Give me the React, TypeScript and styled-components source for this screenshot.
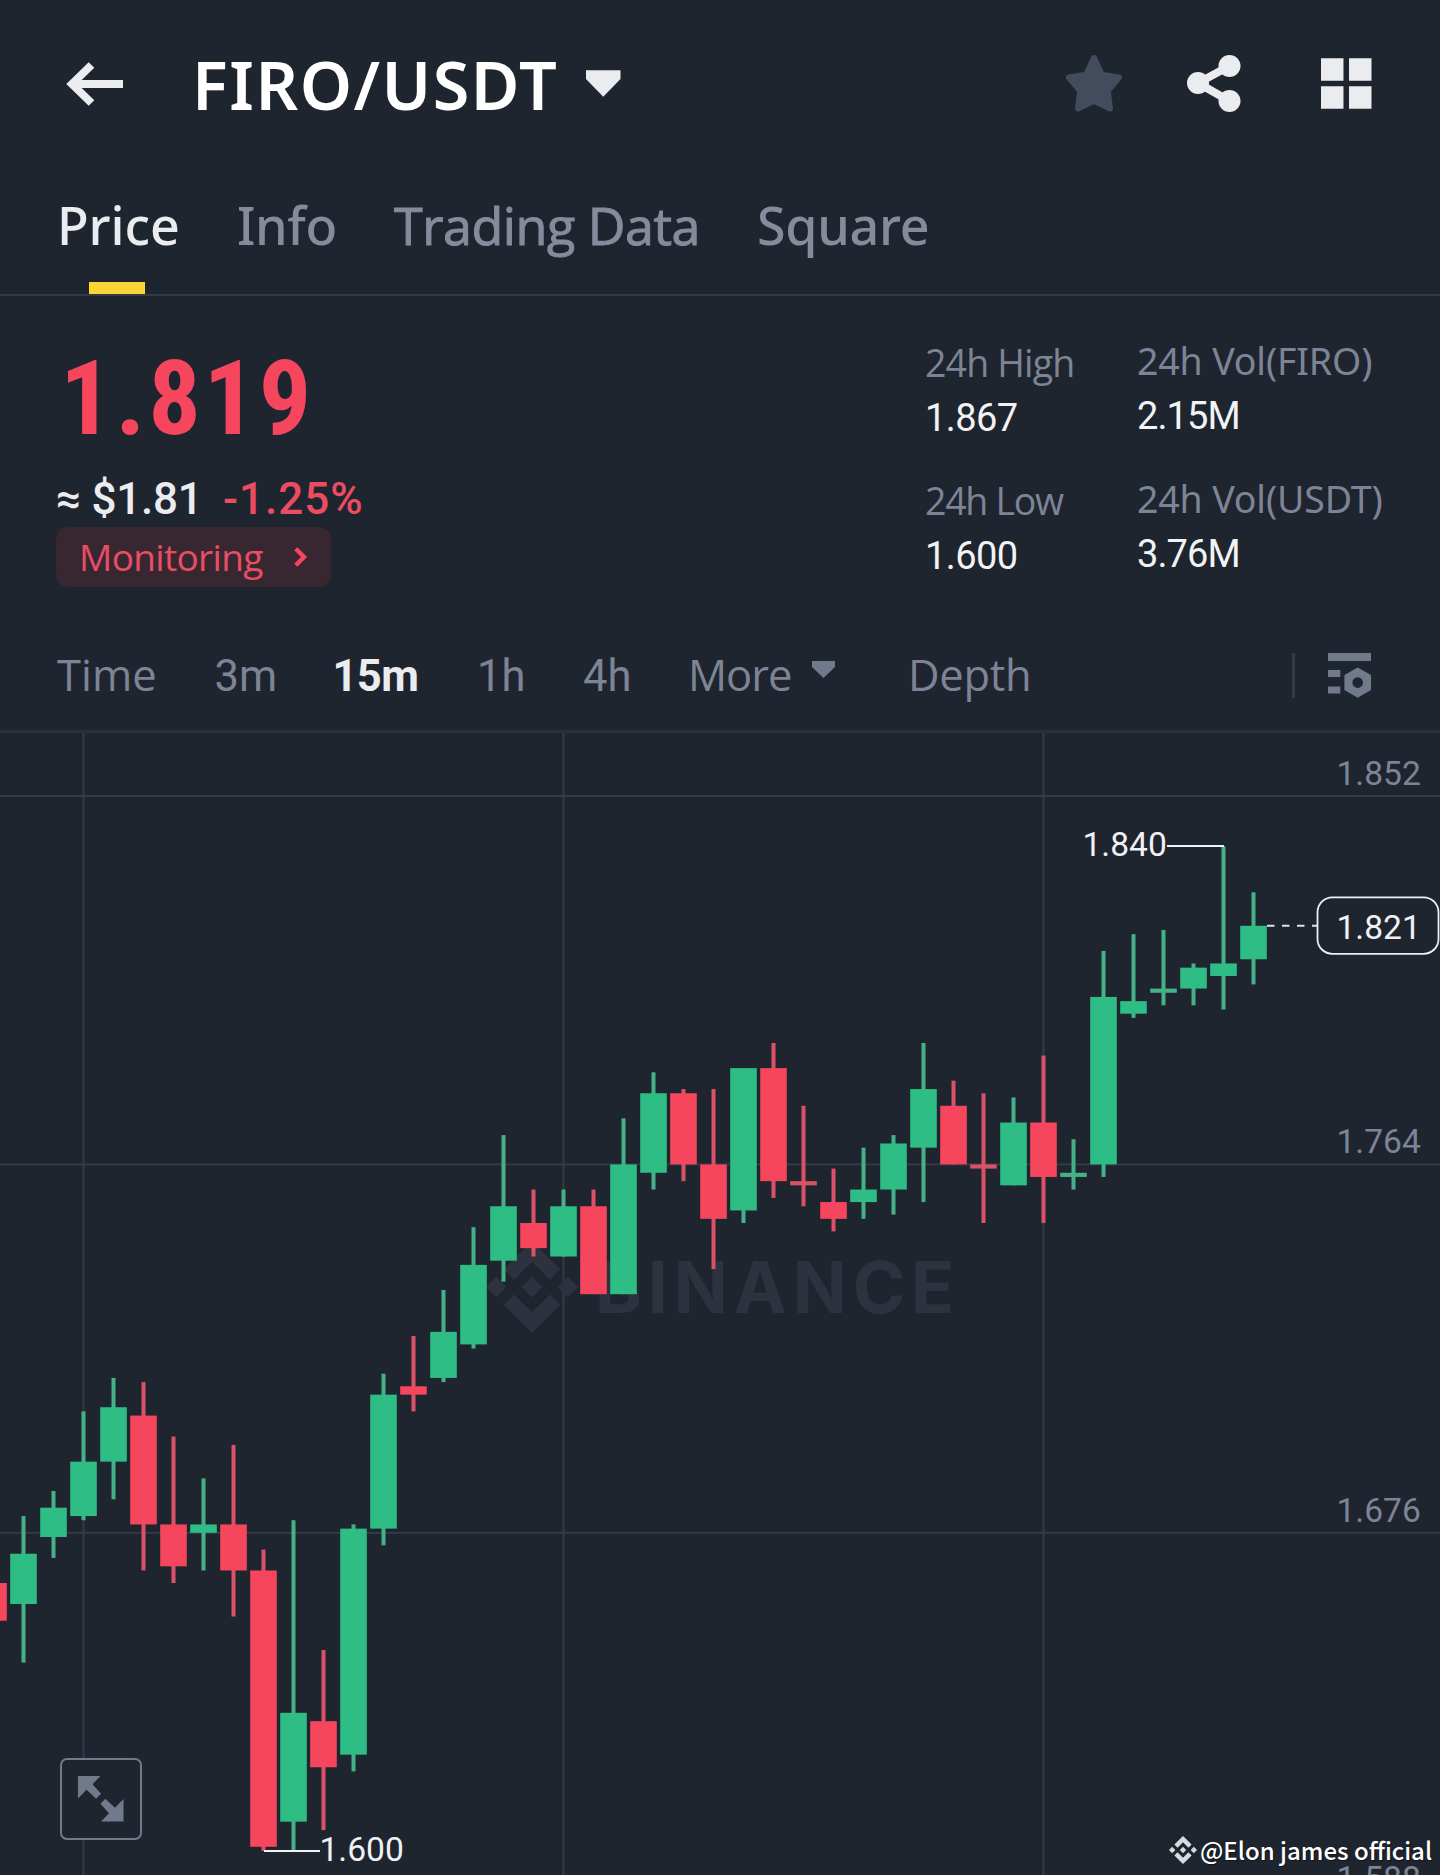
import React from "react";
import styled, { createGlobalStyle } from "styled-components";

const color = {
  bg: "#1f252f",
  text: "#eaecef",
  muted: "#848c9c",
  label: "#7c8495",
  icon: "#717a8b",
  line: "#333b47",
  red: "#f6465d",
  redSoft: "#d95268",
  green: "#2ebd85",
  greenSoft: "#45b187",
};

const humanist = `"Noto Sans", "Open Sans", sans-serif`;
const open = `"Open Sans", "Noto Sans", sans-serif`;
const numeric = `Roboto, "Noto Sans", sans-serif`;

const GlobalStyle = createGlobalStyle`
  * { box-sizing: border-box; }
  body { margin: 0; background: ${color.bg}; }
`;

const Screen = styled.main`
  width: 1440px;
  height: 1875px;
  overflow: hidden;
  background: ${color.bg};
  color: ${color.text};
  font-family: ${humanist};
  white-space: nowrap;
`;

const Header = styled.header`
  display: flex;
  align-items: center;
  height: 168px;
  padding: 0 68.5px 1px 66px;
`;

const Pair = styled.h1`
  margin: 0 0 0 68px;
  width: 393.5px;
  font-size: 66.5px;
  font-weight: 600;
  line-height: 90px;
  letter-spacing: 1.5px;
  color: #fff;
`;

const Actions = styled.div`
  display: flex;
  align-items: center;
  margin-left: auto;
`;

const Icon = styled.svg<{ $gap?: number }>`
  display: block;
  flex: none;
  overflow: visible;
  margin-left: ${(p) => p.$gap ?? 0}px;
`;

const Tabs = styled.nav`
  display: grid;
  grid-template-columns: 180px 157px 363px auto;
  height: 128px;
  padding-left: 57px;
  border-bottom: 2px solid ${color.line};
`;

const Tab = styled.span<{ $active?: boolean; $open?: boolean; $track?: number }>`
  position: relative;
  justify-self: start;
  height: 126px;
  line-height: 114px;
  font-family: ${(p) => (p.$open ? open : humanist)};
  font-size: 52px;
  font-weight: ${(p) => (p.$open ? 400 : 500)};
  -webkit-text-stroke: ${(p) => (p.$open ? "1px" : "0")} currentColor;
  letter-spacing: ${(p) => p.$track ?? 0}px;
  color: ${(p) => (p.$active ? color.text : color.muted)};

  ${(p) =>
    p.$active &&
    `&::after {
      content: "";
      position: absolute;
      left: calc(50% - 29.5px);
      bottom: 0;
      width: 56px;
      height: 12px;
      background: #fcd535;
    }`}
`;

const Summary = styled.section`
  display: flex;
  height: 324px;
`;

const Quote = styled.div`
  width: 925px;
  padding: 41.5px 0 0 56px;
`;

const LastPrice = styled.div`
  padding-left: 4px;
  font-family: "Roboto Condensed", Roboto, sans-serif;
  font-stretch: 75%;
  font-size: 104px;
  font-weight: 700;
  line-height: 122px;
  letter-spacing: 2.7px;
  color: ${color.red};
`;

const Change = styled.div`
  display: flex;
  margin-top: 12.5px;
  font-family: ${numeric};
  font-size: 44px;
  font-weight: 500;
  line-height: 54px;
`;

const Fiat = styled.span`
  width: 167px;
  letter-spacing: -0.25px;
`;

const Percent = styled.span`
  letter-spacing: 1px;
  color: #ea4c62;
`;

const Monitoring = styled.div`
  display: flex;
  align-items: center;
  justify-content: space-between;
  width: 275px;
  height: 60px;
  margin-top: 0.5px;
  padding: 0 24px 0 23px;
  border-radius: 12px;
  background: #382731;
  color: #e84e63;
  font-family: ${open};
  font-size: 37px;
  letter-spacing: -0.65px;
`;

const StatColumn = styled.div<{ $top: number; $width: number }>`
  width: ${(p) => p.$width}px;
  padding-top: ${(p) => p.$top}px;

  dl { margin: 0 0 26.7px; }
`;

const StatLabel = styled.dt<{ $open?: boolean; $track?: number }>`
  font-family: ${(p) => (p.$open ? open : humanist)};
  font-size: 37.5px;
  line-height: 50px;
  letter-spacing: ${(p) => p.$track ?? -0.1}px;
  color: ${color.label};
`;

const StatValue = styled.dd<{ $track: number }>`
  margin: 0;
  font-family: ${numeric};
  font-size: 38px;
  line-height: 61.5px;
  letter-spacing: ${(p) => p.$track}px;
  color: #f2f3f5;
`;

const Intervals = styled.div`
  display: grid;
  grid-template-columns: 157.5px 118px 144.500px 106px 105px 220px 384px 36px auto;
  grid-template-rows: 110px;
  align-items: center;
  height: 110px;
  padding-left: 57px;
`;

const Interval = styled.span<{ $active?: boolean; $numeric?: boolean; $track?: number }>`
  display: flex;
  align-items: center;
  font-family: ${(p) => (p.$numeric ? numeric : open)};
  font-size: 43.5px;
  font-weight: ${(p) => (p.$active ? 700 : 400)};
  line-height: 60px;
  padding-top: ${(p) => (p.$numeric ? 4 : 0)}px;
  letter-spacing: ${(p) => p.$track ?? 0}px;
  color: ${(p) => (p.$active ? color.text : color.label)};
`;

const Divider = styled.i`
  width: 3px;
  height: 45px;
  background: ${color.line};
`;

const ChartPanel = styled.section`
  position: relative;
  height: 1145px;
  border-top: 3px solid #29303c;
`;

const ChartSvg = styled.svg`
  display: block;
`;

const ChartText = styled.text<{ $muted?: boolean }>`
  font-family: ${numeric};
  font-size: 33.6px;
  fill: ${(p) => (p.$muted ? color.label : "#f0f1f4")};
`;

const WatermarkText = styled.text`
  font-family: Inter, sans-serif;
  font-size: 71px;
  font-weight: 700;
  letter-spacing: 5.9px;
  fill: #2d323e;
`;

const Expand = styled.button`
  position: absolute;
  left: 60px;
  top: 1024.5px;
  width: 82px;
  height: 82px;
  padding: 16.3px;
  border: 2px solid ${color.icon};
  border-radius: 7px;
  background: ${color.bg};
`;

const Credit = styled.div`
  position: absolute;
  left: 1169px;
  top: 1098px;
  display: flex;
  align-items: center;
  gap: 3px;
  height: 38px;
  font-family: "Noto Sans CJK SC", sans-serif;
  font-size: 24px;
  font-weight: 500;
  line-height: 38px;
  color: #fff;
  text-shadow: 1px 1px 1px rgba(0, 0, 0, 0.5);
`;

const logoPath =
  "M38.73 53.2l24.59-24.58 24.6 24.6 14.3-14.31L63.32 0l-38.9 38.9zM0 63.31l14.3-14.31 14.31 14.31-14.31 14.3zM38.73 73.41l24.59 24.59 24.6-24.6 14.31 14.29-38.91 38.91-38.91-38.88zM98 63.31l14.3-14.31 14.31 14.3-14.31 14.32zM77.83 63.3L63.32 48.78 48.81 63.28l14.51 14.5z";

const Logo = ({ size, fill, x, y }: { size: number; fill: string; x?: number; y?: number }) => (
  <svg x={x} y={y} width={size} height={size} viewBox="0 0 126.61 126.61">
    <path d={logoPath} fill={fill} />
  </svg>
);

// Prices in thousandths: open/close extremes of the body, then the wick.
type Candle = [up: 0 | 1, bodyHigh: number, bodyLow: number, high: number, low: number];

const candles: Candle[] = [
  [0, 1664, 1655, 1664, 1655],
  [1, 1671, 1659, 1680, 1645],
  [1, 1682, 1675, 1686, 1670],
  [1, 1693, 1680, 1705, 1679],
  [1, 1706, 1693, 1713, 1684],
  [0, 1704, 1678, 1712, 1667],
  [0, 1678, 1668, 1699, 1664],
  [1, 1678, 1676, 1689, 1667],
  [0, 1678, 1667, 1697, 1656],
  [0, 1667, 1601, 1672, 1600],
  [1, 1633, 1607, 1679, 1600],
  [0, 1631, 1620, 1648, 1605],
  [1, 1677, 1623, 1678, 1619],
  [1, 1709, 1677, 1714, 1673],
  [0, 1711, 1709, 1723, 1705],
  [1, 1724, 1713, 1734, 1712],
  [1, 1740, 1721, 1749, 1720],
  [1, 1754, 1741, 1771, 1736],
  [0, 1750, 1744, 1758, 1742],
  [1, 1754, 1742, 1758, 1742],
  [0, 1754, 1733, 1758, 1733],
  [1, 1764, 1733, 1775, 1733],
  [1, 1781, 1762, 1786, 1758],
  [0, 1781, 1764, 1782, 1760],
  [0, 1764, 1751, 1782, 1739],
  [1, 1787, 1753, 1787, 1750],
  [0, 1787, 1760, 1793, 1756],
  [0, 1760, 1759, 1778, 1754],
  [0, 1755, 1751, 1763, 1748],
  [1, 1758, 1755, 1768, 1751],
  [1, 1769, 1758, 1771, 1752],
  [1, 1782, 1768, 1793, 1755],
  [0, 1778, 1764, 1784, 1764],
  [0, 1764, 1763, 1781, 1750],
  [1, 1774, 1759, 1780, 1759],
  [0, 1774, 1761, 1790, 1750],
  [1, 1762, 1761, 1770, 1758],
  [1, 1804, 1764, 1815, 1761],
  [1, 1803, 1800, 1819, 1799],
  [1, 1806, 1805, 1820, 1802],
  [1, 1811, 1806, 1812, 1802],
  [1, 1812, 1809, 1840, 1801],
  [1, 1821, 1813, 1829, 1807],
];

const yOf = (price: number) => 796 + (1852 - price) * 4.1864;
const xOf = (index: number) => 83.5 + (index - 3) * 30;

const gridPrices = [1852, 1764, 1676];
const axisPrices = [1852, 1764, 1676, 1588];

const CandleShape = ({ candle, index }: { candle: Candle; index: number }) => {
  const [up, bodyHigh, bodyLow, high, low] = candle;
  const x = xOf(index);
  const thin = bodyHigh - bodyLow === 1;
  const soft = up ? color.greenSoft : color.redSoft;
  return (
    <g>
      <rect x={x - 2} y={yOf(high)} width={4} height={yOf(low) - yOf(high)} fill={soft} />
      <rect
        x={x - 13.3}
        y={yOf(bodyHigh)}
        width={26.6}
        height={yOf(bodyLow) - yOf(bodyHigh)}
        fill={thin ? soft : up ? color.green : color.red}
      />
    </g>
  );
};

const Chart = () => (
  <ChartSvg width={1440} height={1142} viewBox="0 733 1440 1142">
    {gridPrices.map((p) => (
      <rect key={p} x={0} y={yOf(p) - 1} width={1440} height={2} fill={color.line} />
    ))}
    {[83.5, 563.5, 1043.5].map((x) => (
      <rect key={x} x={x - 1} y={733} width={2} height={1142} fill={color.line} />
    ))}
    <Logo x={486} y={1241} size={92} fill="#2d323e" />
    <WatermarkText x={595} y={1312.5}>BINANCE</WatermarkText>
    {candles.map((c, i) => (
      <CandleShape key={i} candle={c} index={i} />
    ))}
    {axisPrices.map((p) => (
      <ChartText key={p} $muted x={1336.5} y={yOf(p) - 11}>
        {(p / 1000).toFixed(3)}
      </ChartText>
    ))}
    <rect x={1167} y={845} width={57} height={2} fill="#f0f1f4" />
    <ChartText x={1082.5} y={855.8}>1.840</ChartText>
    <rect x={264} y={1850} width={56} height={2} fill="#f0f1f4" />
    <ChartText x={319.5} y={1860.5}>1.600</ChartText>
    <line x1={1267} x2={1317} y1={925.7} y2={925.7} stroke="#e0e2e6" strokeWidth={2} strokeDasharray="7.5 7.5" />
    <rect x={1317.5} y={897.3} width={121} height={56.6} rx={15} fill={color.bg} stroke="#eceef1" strokeWidth={1.8} />
    <ChartText x={1336.5} y={939}>1.821</ChartText>
  </ChartSvg>
);

export default function App() {
  return (
    <Screen>
      <GlobalStyle />
      <Header>
        <Icon width={58} height={44} viewBox="0 0 58 44" fill="none" stroke={color.text} strokeWidth={8}>
          <path d="M57 22H7M25.5 3L6 22l19.5 19" />
        </Icon>
        <Pair>FIRO/USDT</Pair>
        <Icon width={34.5} height={27} viewBox="0 0 35 27">
          <path d="M0 0h35v9L17.5 27 0 9z" fill={color.text} />
        </Icon>
        <Actions>
          <Icon width={56} height={57} viewBox="0 0 56 57">
            <path
              d="M28 3l7.6 16.6L53 22.5 41.8 35.8 44 53.5 28 45.8 12 53.5l2.2-17.7L3 22.5l17.4-2.9z"
              fill="#434c5c"
              stroke="#434c5c"
              strokeWidth={6}
              strokeLinejoin="round"
            />
          </Icon>
          <Icon $gap={65} width={54} height={57} viewBox="0 0 54 57" fill={color.text}>
            <path d="M42.5 11L11 28l31.5 18" fill="none" stroke={color.text} strokeWidth={8} />
            <circle cx={42.5} cy={11} r={11} />
            <circle cx={11} cy={28} r={11} />
            <circle cx={42.5} cy={46} r={11} />
          </Icon>
          <Icon $gap={80} width={50.5} height={51} viewBox="0 0 51 51" fill={color.text}>
            <path d="M0 0h22.7v22.7H0zM28.3 0H51v22.7H28.3zM0 28.3h22.7V51H0zM28.3 28.3H51V51H28.3z" />
          </Icon>
        </Actions>
      </Header>

      <Tabs>
        <Tab $active $track={-0.1}>Price</Tab>
        <Tab $track={-0.4}>Info</Tab>
        <Tab $open $track={-0.45}>Trading Data</Tab>
        <Tab $track={-0.3}>Square</Tab>
      </Tabs>

      <Summary>
        <Quote>
          <LastPrice>1.819</LastPrice>
          <Change>
            <Fiat>≈ $1.81</Fiat>
            <Percent>-1.25%</Percent>
          </Change>
          <Monitoring>
            Monitoring
            <Icon width={13} height={20} viewBox="0 0 13 20" fill="none" stroke="#f6465d" strokeWidth={4.4}>
              <path d="M1.8 1.8L10 10l-8.2 8.2" />
            </Icon>
          </Monitoring>
        </Quote>
        <StatColumn $top={42} $width={212}>
          <dl>
            <StatLabel $open $track={-0.85}>24h High</StatLabel>
            <StatValue $track={-0.6}>1.867</StatValue>
          </dl>
          <dl>
            <StatLabel $open $track={-1.3}>24h Low</StatLabel>
            <StatValue $track={-0.6}>1.600</StatValue>
          </dl>
        </StatColumn>
        <StatColumn $top={39.5} $width={300}>
          <dl>
            <StatLabel $track={-0.15}>24h Vol(FIRO)</StatLabel>
            <StatValue $track={-0.9}>2.15M</StatValue>
          </dl>
          <dl>
            <StatLabel $track={-0.15}>24h Vol(USDT)</StatLabel>
            <StatValue $track={-0.9}>3.76M</StatValue>
          </dl>
        </StatColumn>
      </Summary>

      <Intervals>
        <Interval>Time</Interval>
        <Interval $numeric>3m</Interval>
        <Interval $numeric $active $track={-0.6}>15m</Interval>
        <Interval $numeric>1h</Interval>
        <Interval $numeric>4h</Interval>
        <Interval $track={-1}>
          More
          <Icon $gap={20} width={23} height={23} viewBox="0 3 23 23">
            <path d="M0 0h23v6L11.5 17 0 6z" fill={color.icon} />
          </Icon>
        </Interval>
        <Interval $track={-0.3}>Depth</Interval>
        <Divider />
        <Icon width={43} height={45} viewBox="0 0 43 45" fill={color.icon}>
          <path d="M0 0h43v8H0zM0 17h12.3v7H0zM0 33.5h12.3v7H0z" />
          <path
            fillRule="evenodd"
            d="M29.7 14.5L43 22v15l-13.3 7.700L16.4 37V22zM29.7 24.300a5.300 5.300 0 1 0 0 10.600 5.300 5.300 0 1 0 0-10.600z"
          />
        </Icon>
      </Intervals>

      <ChartPanel>
        <Chart />
        <Expand aria-label="Full screen">
          <Icon width={45.5} height={45.5} viewBox="0 0 138 138" fill={color.icon}>
            <path d="M0 0h68L44 25l26 29-15 15L26 42 0 68z" />
            <path d="M138 138H70l24-25-26-29 15-15 29 27 26-26z" />
          </Icon>
        </Expand>
        <Credit>
          <Logo size={28} fill="#d8dadd" />
          @Elon james official
        </Credit>
      </ChartPanel>
    </Screen>
  );
}
